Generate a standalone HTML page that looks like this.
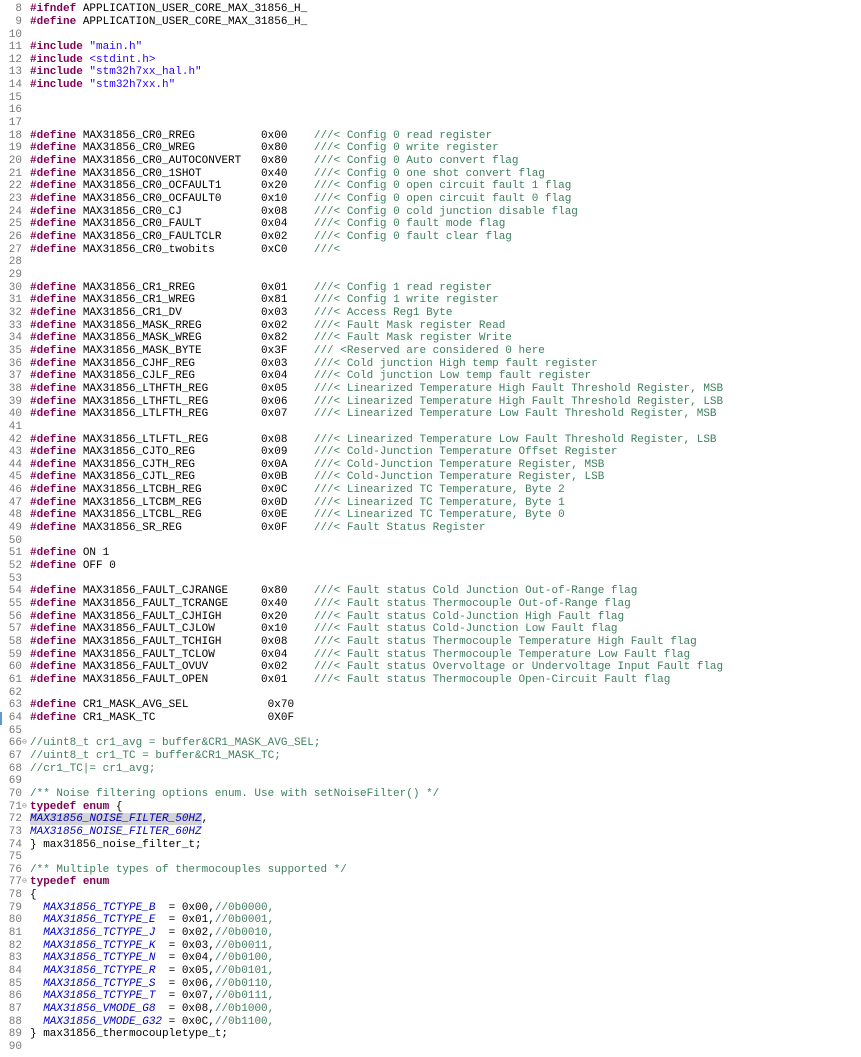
<!DOCTYPE html>
<html><head><meta charset="utf-8">
<style>
html,body{margin:0;padding:0;background:#fff;width:861px;height:1057px;overflow:hidden}
.wrap{position:relative;padding-top:3.2px}
.l{height:12.66px;line-height:12.66px;font-family:"Liberation Mono","Courier New",monospace;font-size:11px;white-space:pre;position:relative}
.n{position:absolute;left:0;width:22px;text-align:right;color:#787878}
.c{position:absolute;left:30px;color:#000}
.k{color:#7f0055;font-weight:bold}
.s{color:#2a00ff}
.m{color:#3f7f5f}
.e{color:#0000c0;font-style:italic}
.f{position:absolute;left:22px;color:#888;font-size:8px}
.hl{background:#d4d4d4}
.bar{position:absolute;left:0;top:0;width:2px;height:12.66px;background:#5b9bd5}
</style></head><body><div class="wrap">
<div class="l"><span class="n">8</span><span class="c"><span class="k">#ifndef</span> APPLICATION_USER_CORE_MAX_31856_H_</span></div>
<div class="l"><span class="n">9</span><span class="c"><span class="k">#define</span> APPLICATION_USER_CORE_MAX_31856_H_</span></div>
<div class="l"><span class="n">10</span></div>
<div class="l"><span class="n">11</span><span class="c"><span class="k">#include</span> <span class="s">"main.h"</span></span></div>
<div class="l"><span class="n">12</span><span class="c"><span class="k">#include</span> <span class="s">&lt;stdint.h&gt;</span></span></div>
<div class="l"><span class="n">13</span><span class="c"><span class="k">#include</span> <span class="s">"stm32h7xx_hal.h"</span></span></div>
<div class="l"><span class="n">14</span><span class="c"><span class="k">#include</span> <span class="s">"stm32h7xx.h"</span></span></div>
<div class="l"><span class="n">15</span></div>
<div class="l"><span class="n">16</span></div>
<div class="l"><span class="n">17</span></div>
<div class="l"><span class="n">18</span><span class="c"><span class="k">#define</span> MAX31856_CR0_RREG          0x00    <span class="m">///&lt; Config 0 read register</span></span></div>
<div class="l"><span class="n">19</span><span class="c"><span class="k">#define</span> MAX31856_CR0_WREG          0x80    <span class="m">///&lt; Config 0 write register</span></span></div>
<div class="l"><span class="n">20</span><span class="c"><span class="k">#define</span> MAX31856_CR0_AUTOCONVERT   0x80    <span class="m">///&lt; Config 0 Auto convert flag</span></span></div>
<div class="l"><span class="n">21</span><span class="c"><span class="k">#define</span> MAX31856_CR0_1SHOT         0x40    <span class="m">///&lt; Config 0 one shot convert flag</span></span></div>
<div class="l"><span class="n">22</span><span class="c"><span class="k">#define</span> MAX31856_CR0_OCFAULT1      0x20    <span class="m">///&lt; Config 0 open circuit fault 1 flag</span></span></div>
<div class="l"><span class="n">23</span><span class="c"><span class="k">#define</span> MAX31856_CR0_OCFAULT0      0x10    <span class="m">///&lt; Config 0 open circuit fault 0 flag</span></span></div>
<div class="l"><span class="n">24</span><span class="c"><span class="k">#define</span> MAX31856_CR0_CJ            0x08    <span class="m">///&lt; Config 0 cold junction disable flag</span></span></div>
<div class="l"><span class="n">25</span><span class="c"><span class="k">#define</span> MAX31856_CR0_FAULT         0x04    <span class="m">///&lt; Config 0 fault mode flag</span></span></div>
<div class="l"><span class="n">26</span><span class="c"><span class="k">#define</span> MAX31856_CR0_FAULTCLR      0x02    <span class="m">///&lt; Config 0 fault clear flag</span></span></div>
<div class="l"><span class="n">27</span><span class="c"><span class="k">#define</span> MAX31856_CR0_twobits       0xC0    <span class="m">///&lt;</span></span></div>
<div class="l"><span class="n">28</span></div>
<div class="l"><span class="n">29</span></div>
<div class="l"><span class="n">30</span><span class="c"><span class="k">#define</span> MAX31856_CR1_RREG          0x01    <span class="m">///&lt; Config 1 read register</span></span></div>
<div class="l"><span class="n">31</span><span class="c"><span class="k">#define</span> MAX31856_CR1_WREG          0x81    <span class="m">///&lt; Config 1 write register</span></span></div>
<div class="l"><span class="n">32</span><span class="c"><span class="k">#define</span> MAX31856_CR1_DV            0x03    <span class="m">///&lt; Access Reg1 Byte</span></span></div>
<div class="l"><span class="n">33</span><span class="c"><span class="k">#define</span> MAX31856_MASK_RREG         0x02    <span class="m">///&lt; Fault Mask register Read</span></span></div>
<div class="l"><span class="n">34</span><span class="c"><span class="k">#define</span> MAX31856_MASK_WREG         0x82    <span class="m">///&lt; Fault Mask register Write</span></span></div>
<div class="l"><span class="n">35</span><span class="c"><span class="k">#define</span> MAX31856_MASK_BYTE         0x3F    <span class="m">/// &lt;Reserved are considered 0 here</span></span></div>
<div class="l"><span class="n">36</span><span class="c"><span class="k">#define</span> MAX31856_CJHF_REG          0x03    <span class="m">///&lt; Cold junction High temp fault register</span></span></div>
<div class="l"><span class="n">37</span><span class="c"><span class="k">#define</span> MAX31856_CJLF_REG          0x04    <span class="m">///&lt; Cold junction Low temp fault register</span></span></div>
<div class="l"><span class="n">38</span><span class="c"><span class="k">#define</span> MAX31856_LTHFTH_REG        0x05    <span class="m">///&lt; Linearized Temperature High Fault Threshold Register, MSB</span></span></div>
<div class="l"><span class="n">39</span><span class="c"><span class="k">#define</span> MAX31856_LTHFTL_REG        0x06    <span class="m">///&lt; Linearized Temperature High Fault Threshold Register, LSB</span></span></div>
<div class="l"><span class="n">40</span><span class="c"><span class="k">#define</span> MAX31856_LTLFTH_REG        0x07    <span class="m">///&lt; Linearized Temperature Low Fault Threshold Register, MSB</span></span></div>
<div class="l"><span class="n">41</span></div>
<div class="l"><span class="n">42</span><span class="c"><span class="k">#define</span> MAX31856_LTLFTL_REG        0x08    <span class="m">///&lt; Linearized Temperature Low Fault Threshold Register, LSB</span></span></div>
<div class="l"><span class="n">43</span><span class="c"><span class="k">#define</span> MAX31856_CJTO_REG          0x09    <span class="m">///&lt; Cold-Junction Temperature Offset Register</span></span></div>
<div class="l"><span class="n">44</span><span class="c"><span class="k">#define</span> MAX31856_CJTH_REG          0x0A    <span class="m">///&lt; Cold-Junction Temperature Register, MSB</span></span></div>
<div class="l"><span class="n">45</span><span class="c"><span class="k">#define</span> MAX31856_CJTL_REG          0x0B    <span class="m">///&lt; Cold-Junction Temperature Register, LSB</span></span></div>
<div class="l"><span class="n">46</span><span class="c"><span class="k">#define</span> MAX31856_LTCBH_REG         0x0C    <span class="m">///&lt; Linearized TC Temperature, Byte 2</span></span></div>
<div class="l"><span class="n">47</span><span class="c"><span class="k">#define</span> MAX31856_LTCBM_REG         0x0D    <span class="m">///&lt; Linearized TC Temperature, Byte 1</span></span></div>
<div class="l"><span class="n">48</span><span class="c"><span class="k">#define</span> MAX31856_LTCBL_REG         0x0E    <span class="m">///&lt; Linearized TC Temperature, Byte 0</span></span></div>
<div class="l"><span class="n">49</span><span class="c"><span class="k">#define</span> MAX31856_SR_REG            0x0F    <span class="m">///&lt; Fault Status Register</span></span></div>
<div class="l"><span class="n">50</span></div>
<div class="l"><span class="n">51</span><span class="c"><span class="k">#define</span> ON 1</span></div>
<div class="l"><span class="n">52</span><span class="c"><span class="k">#define</span> OFF 0</span></div>
<div class="l"><span class="n">53</span></div>
<div class="l"><span class="n">54</span><span class="c"><span class="k">#define</span> MAX31856_FAULT_CJRANGE     0x80    <span class="m">///&lt; Fault status Cold Junction Out-of-Range flag</span></span></div>
<div class="l"><span class="n">55</span><span class="c"><span class="k">#define</span> MAX31856_FAULT_TCRANGE     0x40    <span class="m">///&lt; Fault status Thermocouple Out-of-Range flag</span></span></div>
<div class="l"><span class="n">56</span><span class="c"><span class="k">#define</span> MAX31856_FAULT_CJHIGH      0x20    <span class="m">///&lt; Fault status Cold-Junction High Fault flag</span></span></div>
<div class="l"><span class="n">57</span><span class="c"><span class="k">#define</span> MAX31856_FAULT_CJLOW       0x10    <span class="m">///&lt; Fault status Cold-Junction Low Fault flag</span></span></div>
<div class="l"><span class="n">58</span><span class="c"><span class="k">#define</span> MAX31856_FAULT_TCHIGH      0x08    <span class="m">///&lt; Fault status Thermocouple Temperature High Fault flag</span></span></div>
<div class="l"><span class="n">59</span><span class="c"><span class="k">#define</span> MAX31856_FAULT_TCLOW       0x04    <span class="m">///&lt; Fault status Thermocouple Temperature Low Fault flag</span></span></div>
<div class="l"><span class="n">60</span><span class="c"><span class="k">#define</span> MAX31856_FAULT_OVUV        0x02    <span class="m">///&lt; Fault status Overvoltage or Undervoltage Input Fault flag</span></span></div>
<div class="l"><span class="n">61</span><span class="c"><span class="k">#define</span> MAX31856_FAULT_OPEN        0x01    <span class="m">///&lt; Fault status Thermocouple Open-Circuit Fault flag</span></span></div>
<div class="l"><span class="n">62</span></div>
<div class="l"><span class="n">63</span><span class="c"><span class="k">#define</span> CR1_MASK_AVG_SEL            0x70</span></div>
<div class="l"><span class="bar"></span><span class="n">64</span><span class="c"><span class="k">#define</span> CR1_MASK_TC                 0X0F</span></div>
<div class="l"><span class="n">65</span></div>
<div class="l"><span class="n">66</span><span class="f">⊖</span><span class="c"><span class="m">//uint8_t cr1_avg = buffer&amp;CR1_MASK_AVG_SEL;</span></span></div>
<div class="l"><span class="n">67</span><span class="c"><span class="m">//uint8_t cr1_TC = buffer&amp;CR1_MASK_TC;</span></span></div>
<div class="l"><span class="n">68</span><span class="c"><span class="m">//cr1_TC|= cr1_avg;</span></span></div>
<div class="l"><span class="n">69</span></div>
<div class="l"><span class="n">70</span><span class="c"><span class="m">/** Noise filtering options enum. Use with setNoiseFilter() */</span></span></div>
<div class="l"><span class="n">71</span><span class="f">⊖</span><span class="c"><span class="k">typedef</span> <span class="k">enum</span> {</span></div>
<div class="l"><span class="n">72</span><span class="c"><span class="e hl">MAX31856_NOISE_FILTER_50HZ</span>,</span></div>
<div class="l"><span class="n">73</span><span class="c"><span class="e">MAX31856_NOISE_FILTER_60HZ</span></span></div>
<div class="l"><span class="n">74</span><span class="c">} max31856_noise_filter_t;</span></div>
<div class="l"><span class="n">75</span></div>
<div class="l"><span class="n">76</span><span class="c"><span class="m">/** Multiple types of thermocouples supported */</span></span></div>
<div class="l"><span class="n">77</span><span class="f">⊖</span><span class="c"><span class="k">typedef</span> <span class="k">enum</span></span></div>
<div class="l"><span class="n">78</span><span class="c">{</span></div>
<div class="l"><span class="n">79</span><span class="c">  <span class="e">MAX31856_TCTYPE_B</span>  = 0x00,<span class="m">//0b0000,</span></span></div>
<div class="l"><span class="n">80</span><span class="c">  <span class="e">MAX31856_TCTYPE_E</span>  = 0x01,<span class="m">//0b0001,</span></span></div>
<div class="l"><span class="n">81</span><span class="c">  <span class="e">MAX31856_TCTYPE_J</span>  = 0x02,<span class="m">//0b0010,</span></span></div>
<div class="l"><span class="n">82</span><span class="c">  <span class="e">MAX31856_TCTYPE_K</span>  = 0x03,<span class="m">//0b0011,</span></span></div>
<div class="l"><span class="n">83</span><span class="c">  <span class="e">MAX31856_TCTYPE_N</span>  = 0x04,<span class="m">//0b0100,</span></span></div>
<div class="l"><span class="n">84</span><span class="c">  <span class="e">MAX31856_TCTYPE_R</span>  = 0x05,<span class="m">//0b0101,</span></span></div>
<div class="l"><span class="n">85</span><span class="c">  <span class="e">MAX31856_TCTYPE_S</span>  = 0x06,<span class="m">//0b0110,</span></span></div>
<div class="l"><span class="n">86</span><span class="c">  <span class="e">MAX31856_TCTYPE_T</span>  = 0x07,<span class="m">//0b0111,</span></span></div>
<div class="l"><span class="n">87</span><span class="c">  <span class="e">MAX31856_VMODE_G8</span>  = 0x08,<span class="m">//0b1000,</span></span></div>
<div class="l"><span class="n">88</span><span class="c">  <span class="e">MAX31856_VMODE_G32</span> = 0x0C,<span class="m">//0b1100,</span></span></div>
<div class="l"><span class="n">89</span><span class="c">} max31856_thermocoupletype_t;</span></div>
<div class="l"><span class="n">90</span></div>
</div></body></html>
